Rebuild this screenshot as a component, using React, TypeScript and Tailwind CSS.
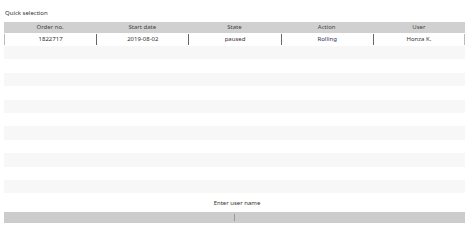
import React from 'react';

const columns = ['Order no.', 'Start date', 'State', 'Action', 'User'];

const firstRow = ['1822717', '2019-08-02', 'paused', 'Rolling', 'Honza K.'];

export default function App() {
    const emptyRows = Array.from({ length: 11 }, (_, i) => i);
    return (
        <div className="w-[474px] h-[234px] bg-white font-['Noto_Sans',sans-serif] text-[6px] text-[#333] antialiased">
            <div className="pl-[5px] pt-[9px] h-[22px] leading-[9px]">Quick selection</div>
            <div className="mx-[4px] w-[461px]">
                <div className="grid grid-cols-5 h-[11px] bg-[#d0d0d0] text-[#444]">
                    {columns.map((c) => (
                        <div key={c} className="flex items-center justify-center">{c}</div>
                    ))}
                </div>
                <div className="grid grid-cols-5 h-[13px] bg-white">
                    {firstRow.map((v, i) => (
                        <div
                            key={i}
                            className={`flex items-center justify-center my-[1px] ${i === 0 ? 'border-l border-[#bbb]' : 'border-l-[1.5px] border-[#666]'} ${i === 4 ? 'border-r border-r-[#bbb]' : ''}`}
                        >
                            <span className={i === 3 ? 'text-[#2f2a5a]' : ''}>{v}</span>
                        </div>
                    ))}
                </div>
                {emptyRows.map((i) => (
                    <div key={i} className={`h-[13.4px] ${i % 2 === 0 ? 'bg-[#f7f7f7]' : 'bg-white'}`} />
                ))}
            </div>
            <div className="flex justify-center pt-[6px] h-[19px] leading-[9px]">Enter user name</div>
            <div className="mx-[4px] w-[461px] h-[11px] bg-[#cccccc] flex items-center justify-center">
                <div className="w-px h-[7px] bg-[#999]" />
            </div>
        </div>
    );
}
